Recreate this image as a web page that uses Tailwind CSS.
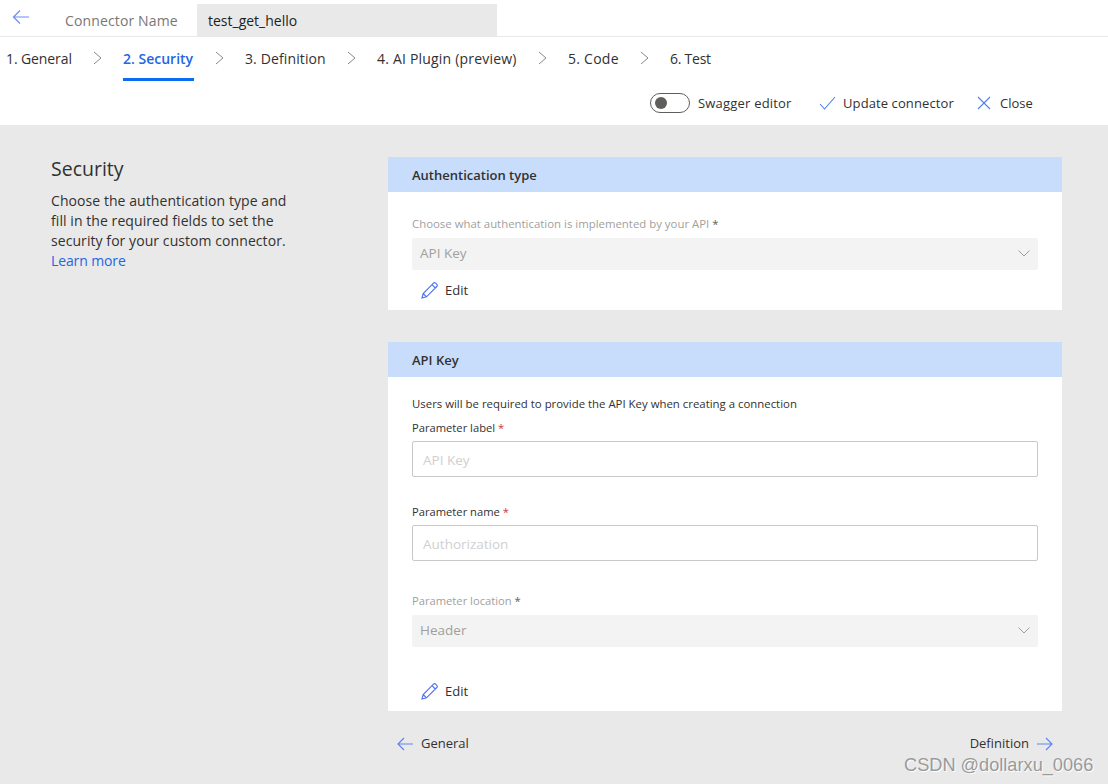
<!DOCTYPE html>
<html lang="en">
<head>
    <title>Custom connector - Security</title>
    <meta charset="utf-8">
    <script src="https://cdn.jsdelivr.net/npm/@tailwindcss/browser@4"></script>
</head>
<body class="relative flex flex-col w-[1108px] h-[784px] overflow-hidden bg-[#e9e9e9] font-['Open_Sans',sans-serif] text-[14px] text-[#323130]">
    <!-- top bar -->
    <header class="bg-white h-[125px] shrink-0">
        <div class="flex flex-row items-end h-[37px] border-b border-[#e9e9e9]">
            <svg class="w-[18px] h-[16px] ml-[12px] mb-[11px] text-[#6b8cf5]" viewBox="0 0 18 16" fill="none" stroke="currentColor" stroke-width="1.2"><path d="M17 8H1.500M8 1.500 1.500 8 8 14.500"/></svg>
            <p class="ml-[35px] w-[132px] h-[32px] leading-[34px] tracking-[0.13px] text-[#797775]">Connector Name</p>
            <p class="w-[300px] h-[32px] leading-[34px] px-[11px] bg-[#e9e9e9] text-[#201f1e]">test_get_hello</p>
        </div>
        <nav class="flex flex-row items-center gap-[21px] pl-[6px] h-[44px] pb-[2px]">
            <span class="w-[66px] whitespace-nowrap tracking-[-0.1px]">1. General</span>
            <svg class="w-[9px] h-[14px] text-[#8a8886]" viewBox="0 0 9 14" fill="none" stroke="currentColor"><path d="M1 1l7 6-7 6"/></svg>
            <span class="relative w-[71px] whitespace-nowrap font-semibold text-[#2266e3]">2. Security<i class="absolute left-0 right-0 top-[30px] h-[3px] bg-[#0b6cf5]"></i></span>
            <svg class="w-[9px] h-[14px] text-[#8a8886]" viewBox="0 0 9 14" fill="none" stroke="currentColor"><path d="M1 1l7 6-7 6"/></svg>
            <span class="w-[81px] whitespace-nowrap tracking-[0.12px]">3. Definition</span>
            <svg class="w-[9px] h-[14px] text-[#8a8886]" viewBox="0 0 9 14" fill="none" stroke="currentColor"><path d="M1 1l7 6-7 6"/></svg>
            <span class="w-[140px] whitespace-nowrap tracking-[0.2px]">4. AI Plugin (preview)</span>
            <svg class="w-[9px] h-[14px] text-[#8a8886]" viewBox="0 0 9 14" fill="none" stroke="currentColor"><path d="M1 1l7 6-7 6"/></svg>
            <span class="w-[51px] whitespace-nowrap tracking-[0.25px]">5. Code</span>
            <svg class="w-[9px] h-[14px] text-[#8a8886]" viewBox="0 0 9 14" fill="none" stroke="currentColor"><path d="M1 1l7 6-7 6"/></svg>
            <span class="w-[41px] whitespace-nowrap tracking-[-0.25px]">6. Test</span>
        </nav>
        <div class="flex flex-row items-center justify-end h-[44px] pr-[75px] text-[13px]">
            <div class="flex items-center w-[40px] h-[20px] mr-[8px] pl-[4px] border border-[#605e5c] rounded-full">
                <div class="w-[12px] h-[12px] rounded-full bg-[#605e5c]"></div>
            </div>
            <span class="w-[94px] whitespace-nowrap mt-[1px] tracking-[0.2px]">Swagger editor</span>
            <svg class="w-[17px] h-[14px] ml-[27px] mr-[7px] text-[#4f7df0]" viewBox="0 0 17 14" fill="none" stroke="currentColor" stroke-width="1.100"><path d="M1 8l4.500 5L16 1"/></svg>
            <span class="w-[111px] whitespace-nowrap mt-[1px] tracking-[0.1px]">Update connector</span>
            <svg class="w-[14px] h-[14px] ml-[23px] mr-[9px] text-[#4f7df0]" viewBox="0 0 14 14" fill="none" stroke="currentColor" stroke-width="1.100"><path d="M1 1l12 12M13 1 1 13"/></svg>
            <span class="w-[33px] whitespace-nowrap mt-[1px]">Close</span>
        </div>
    </header>

    <main class="flex flex-row flex-1 pt-[32px] pl-[51px]">
        <aside class="w-[337px] shrink-0">
            <h2 class="text-[19.500px] leading-[24px]">Security</h2>
            <p class="w-[250px] mt-[10px] leading-[20px] tracking-[0.07px]">Choose the authentication type and fill in the required fields to set the security for your custom connector. <a class="text-[#2266e3] tracking-[-0.12px]">Learn more</a></p>
        </aside>

        <div class="flex flex-col w-[674px]">
            <section class="bg-white h-[153px]">
                <h3 class="h-[35px] leading-[37px] px-[24px] bg-[#c8ddfc] text-[13px] font-semibold">Authentication type</h3>
                <div class="px-[24px] pt-[23px]">
                    <p class="h-[23px] leading-[18px] text-[11.400px] text-[#a19f9d]">Choose what authentication is implemented by your API <span class="text-[#605e5c]">*</span></p>
                    <div class="flex items-center justify-between h-[32px] pl-[8px] pr-[8px] pb-[2px] bg-[#f3f3f3] rounded-[2px] text-[13.500px] text-[#a19f9d]">
                        API Key
                        <svg class="w-[12px] h-[7px] text-[#a19f9d]" viewBox="0 0 12 7" fill="none" stroke="currentColor"><path d="M.5.5 6 6l5.500-5.500"/></svg>
                    </div>
                    <div class="flex items-center h-[20px] mt-[10px] pl-[9px] text-[13px]">
                        <svg class="w-[17px] h-[17px] mr-[7px] text-[#4f6ff0]" viewBox="0 0 17 17" fill="none" stroke="currentColor" stroke-width="1.100"><path d="M1 16l1.200-4.500L12.500 1.200a1.500 1.500 0 0 1 2.100 0l1.200 1.200a1.500 1.500 0 0 1 0 2.100L5.500 14.800zM2.200 11.500l3.300 3.300M11 2.700l3.300 3.300"/></svg>
                        <span class="mt-[2px]">Edit</span>
                    </div>
                </div>
            </section>

            <section class="bg-white h-[369px] mt-[32px]">
                <h3 class="h-[35px] leading-[37px] px-[24px] bg-[#c8ddfc] text-[13px] font-semibold">API Key</h3>
                <div class="px-[24px] pt-[18px]">
                    <p class="h-[23px] leading-[18px] text-[11.400px]">Users will be required to provide the API Key when creating a connection</p>
                    <p class="h-[23px] leading-[19px] text-[11.200px]">Parameter label <span class="text-[#d13438]">*</span></p>
                    <div class="flex items-center h-[36px] pt-[2px] px-[10px] border border-[#c8c8c8] rounded-[2px] text-[13.500px] text-[#d0d0d0]">API Key</div>
                    <p class="h-[23px] mt-[25px] leading-[19px] text-[11.200px]">Parameter name <span class="text-[#d13438]">*</span></p>
                    <div class="flex items-center h-[36px] pt-[2px] px-[10px] border border-[#c8c8c8] rounded-[2px] text-[13.500px] text-[#d0d0d0]">Authorization</div>
                    <p class="h-[23px] mt-[31px] leading-[18px] text-[11.200px] text-[#a19f9d]">Parameter location <span class="text-[#605e5c]">*</span></p>
                    <div class="flex items-center justify-between h-[32px] pl-[8px] pr-[8px] pb-[2px] bg-[#f3f3f3] rounded-[2px] text-[13.500px] text-[#a19f9d]">
                        Header
                        <svg class="w-[12px] h-[7px] text-[#a19f9d]" viewBox="0 0 12 7" fill="none" stroke="currentColor"><path d="M.5.5 6 6l5.500-5.500"/></svg>
                    </div>
                    <div class="flex items-center h-[20px] mt-[34px] pl-[9px] text-[13px]">
                        <svg class="w-[17px] h-[17px] mr-[7px] text-[#4f6ff0]" viewBox="0 0 17 17" fill="none" stroke="currentColor" stroke-width="1.100"><path d="M1 16l1.200-4.500L12.500 1.200a1.500 1.500 0 0 1 2.100 0l1.200 1.200a1.500 1.500 0 0 1 0 2.100L5.500 14.800zM2.200 11.500l3.300 3.300M11 2.700l3.300 3.300"/></svg>
                        <span class="mt-[2px]">Edit</span>
                    </div>
                </div>
            </section>

            <div class="flex flex-row items-center justify-between h-[20px] mt-[23px] pl-[9px] pr-[9px] text-[13px]">
                <div class="flex items-center">
                    <svg class="w-[16px] h-[14px] mr-[8px] text-[#5f85f0]" viewBox="0 0 16 14" fill="none" stroke="currentColor" stroke-width="1.200"><path d="M16 7H1M7 1 1 7l6 6"/></svg>
                    General
                </div>
                <div class="flex items-center">
                    Definition
                    <svg class="w-[16px] h-[14px] ml-[8px] text-[#5f85f0]" viewBox="0 0 16 14" fill="none" stroke="currentColor" stroke-width="1.200"><path d="M0 7h15M9 1l6 6-6 6"/></svg>
                </div>
            </div>
        </div>
    </main>

    <!-- watermark -->
    <div class="absolute left-[904px] top-[754px] font-['Liberation_Sans',sans-serif] text-[18.200px] leading-[22px] text-[#9a9a9a] [text-shadow:1px_1px_1px_#fff]">CSDN @dollarxu_0066</div>
</body>
</html>
